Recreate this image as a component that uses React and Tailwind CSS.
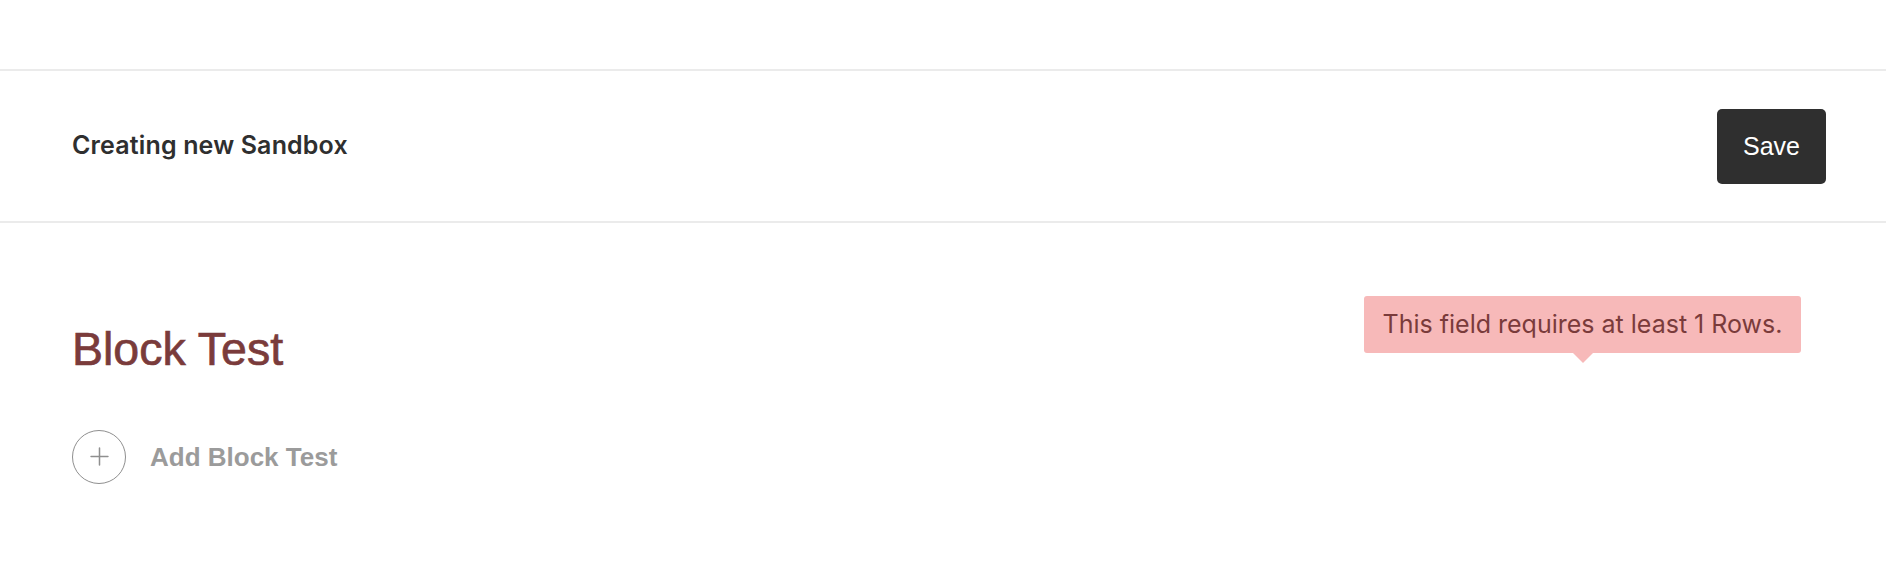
import { Plus } from "lucide-react";

const App = () => {
  return (
    <div className="min-h-[564px] w-full bg-white">
      {/* Top spacer */}
      <div className="h-[71px] border-b-2 border-[#ebebeb]" />

      {/* Header bar */}
      <div className="h-[152px] flex items-center justify-between pl-[72px] pr-[60px] border-b-2 border-[#ebebeb]">
        <span className="pb-0.5 text-[25px] leading-none font-semibold tracking-[0.15px] text-[#2f2f2f] font-['Inter',sans-serif]">
          Creating new Sandbox
        </span>
        <button className="w-[109px] h-[75px] rounded-[5px] bg-[#2f2f2f] text-white text-[25px] leading-none font-['Liberation_Sans',Arial,sans-serif]">
          Save
        </button>
      </div>

      {/* Field */}
      <div className="relative pl-[72px] pt-[103px]">
        <h2 className="text-[46.5px] leading-none font-normal text-[#7a3b3b] [-webkit-text-stroke:0.7px_#7a3b3b] font-['Liberation_Sans',Arial,sans-serif]">
          Block Test
        </h2>

        {/* Error tooltip */}
        <div className="absolute top-[73px] right-[85px] w-[437px]">
          <div className="h-[57px] rounded-[3px] bg-[#f7b9b9] flex items-center justify-center">
            <span className="text-[25px] leading-none text-[#7a3b3b] font-['Inter',sans-serif]">
              This field requires at least 1 Rows.
            </span>
          </div>
          <div className="mx-auto w-0 h-0 border-l-[10px] border-r-[10px] border-t-[10px] border-l-transparent border-r-transparent border-t-[#f7b9b9]" />
        </div>

        <button className="mt-[57px] flex items-center gap-[24px]">
          <span className="w-[54px] h-[54px] rounded-full border-[1.5px] border-[#8f8f8f] flex items-center justify-center text-[#8f8f8f]">
            <Plus size={29} strokeWidth={1.25} />
          </span>
          <span className="text-[26px] leading-none font-bold text-[#9b9b9b] font-['Liberation_Sans',Arial,sans-serif]">
            Add Block Test
          </span>
        </button>
      </div>
    </div>
  );
};

export default App;
